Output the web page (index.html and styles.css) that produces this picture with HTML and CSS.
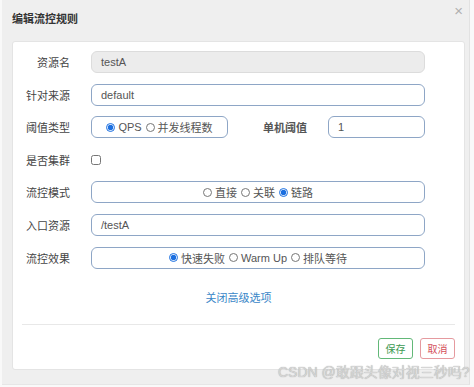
FILE: index.html
```html
<!DOCTYPE html>
<html lang="zh">
<head>
<meta charset="utf-8">
<title>编辑流控规则</title>
<link rel="stylesheet" href="styles.css">
</head>
<body>
<div class="dialog">
  <div class="header">
    <span class="title">编辑流控规则</span>
    <span class="close">×</span>
  </div>
  <div class="panel">
    <div class="form">
      <div class="row">
        <label class="label">资源名</label>
        <div class="input disabled">testA</div>
      </div>
      <div class="row">
        <label class="label">针对来源</label>
        <div class="input">default</div>
      </div>
      <div class="row">
        <label class="label">阈值类型</label>
        <div class="box box-small">
          <label class="opt"><input type="radio" name="grade" checked>QPS</label>
          <label class="opt"><input type="radio" name="grade">并发线程数</label>
        </div>
        <label class="label label-right">单机阈值</label>
        <div class="input input-small">1</div>
      </div>
      <div class="row">
        <label class="label">是否集群</label>
        <input type="checkbox" class="check">
      </div>
      <div class="row">
        <label class="label">流控模式</label>
        <div class="box">
          <label class="opt"><input type="radio" name="mode">直接</label>
          <label class="opt"><input type="radio" name="mode">关联</label>
          <label class="opt"><input type="radio" name="mode" checked>链路</label>
        </div>
      </div>
      <div class="row">
        <label class="label">入口资源</label>
        <div class="input">/testA</div>
      </div>
      <div class="row">
        <label class="label">流控效果</label>
        <div class="box">
          <label class="opt"><input type="radio" name="effect" checked>快速失败</label>
          <label class="opt"><input type="radio" name="effect">Warm Up</label>
          <label class="opt"><input type="radio" name="effect">排队等待</label>
        </div>
      </div>
    </div>
    <div class="more"><a class="link">关闭高级选项</a></div>
    <div class="divider"></div>
    <div class="footer">
      <button class="btn btn-save">保存</button>
      <button class="btn btn-cancel">取消</button>
    </div>
  </div>
  <div class="watermark">CSDN @敢跟头像对视三秒吗?</div>
</div>
</body>
</html>
```

FILE: styles.css
```css
html, body {
  margin: 0;
  padding: 0;
}
body {
  background: #f9f9f9;
  font-family: "Liberation Sans", "Noto Sans CJK SC", sans-serif;
  font-size: 11px;
  color: #333;
  width: 474px;
  height: 387px;
  overflow: hidden;
}
.dialog {
  position: relative;
  margin-left: 2px;
  width: 468px;
  height: 385px;
  background: #efefef;
  border-right: 1px solid #e2e2e2;
  border-bottom: 1px solid #e6e6e6;
  box-sizing: border-box;
}
.header {
  height: 41px;
  display: flex;
  justify-content: space-between;
  padding: 0 6px 0 10px;
  box-sizing: border-box;
}
.title {
  margin-top: 13px;
  font-size: 11px;
  line-height: 12px;
  font-weight: bold;
  color: #333;
}
.close {
  margin-top: 3px;
  font-size: 15px;
  line-height: 16px;
  color: #b0b0b0;
}
.panel {
  margin-left: 10px;
  width: 453px;
  height: 329px;
  background: #fff;
  border: 1px solid #e4e4e4;
  border-radius: 3px;
  box-sizing: border-box;
}
.form {
  padding-top: 9px;
  display: flex;
  flex-direction: column;
  gap: 10.6px;
}
.row {
  display: flex;
  align-items: center;
  height: 22px;
}
.label {
  width: 57px;
  margin-right: 21px;
  text-align: right;
  font-size: 11px;
  color: #444;
  flex: none;
}
.label-right {
  width: 79px;
  font-weight: bold;
  color: #555;
}
.input {
  width: 334px;
  height: 22px;
  box-sizing: border-box;
  border: 1px solid #8ea6c6;
  border-radius: 6px;
  padding-left: 9px;
  line-height: 20px;
  font-size: 11px;
  color: #555;
}
.input.disabled {
  background: #ececec;
  border-color: #dcdcdc;
}
.input-small {
  width: 97px;
}
.box {
  width: 334px;
  height: 22px;
  box-sizing: border-box;
  border: 1px solid #8ea6c6;
  border-radius: 6px;
  display: flex;
  align-items: center;
  justify-content: center;
  gap: 4px;
  font-size: 11px;
  color: #555;
}
.box-small {
  width: 137px;
}
.opt {
  display: flex;
  align-items: center;
}
.opt input {
  width: 9px;
  height: 9px;
  margin: 0 3px 0 0;
  accent-color: #1c6fe0;
}
.check {
  width: 10px;
  height: 10px;
  margin: 0;
}
.more {
  margin-top: 22px;
  text-align: center;
  line-height: 14px;
}
.link {
  color: #3a87c8;
  font-size: 11px;
  cursor: pointer;
}
.divider {
  margin: 19px 9px 0 9px;
  height: 1px;
  background: #e8e8e8;
}
.footer {
  display: flex;
  justify-content: flex-end;
  gap: 7px;
  padding: 13px 9px 0 0;
}
.btn {
  width: 35px;
  height: 21px;
  padding: 0;
  background: #fff;
  border-radius: 3px;
  font-family: "Liberation Sans", "Noto Sans CJK SC", sans-serif;
  font-size: 10px;
  cursor: pointer;
}
.btn-save {
  border: 1px solid #62b878;
  color: #3c9a52;
}
.btn-cancel {
  border: 1px solid #e59a9f;
  color: #d4505a;
}
.watermark {
  position: absolute;
  left: 276px;
  top: 363px;
  font-size: 14px;
  line-height: 18px;
  font-weight: normal;
  color: #d6d6d6;
  text-shadow: 0 0 1px #999;
  white-space: nowrap;
}
```
